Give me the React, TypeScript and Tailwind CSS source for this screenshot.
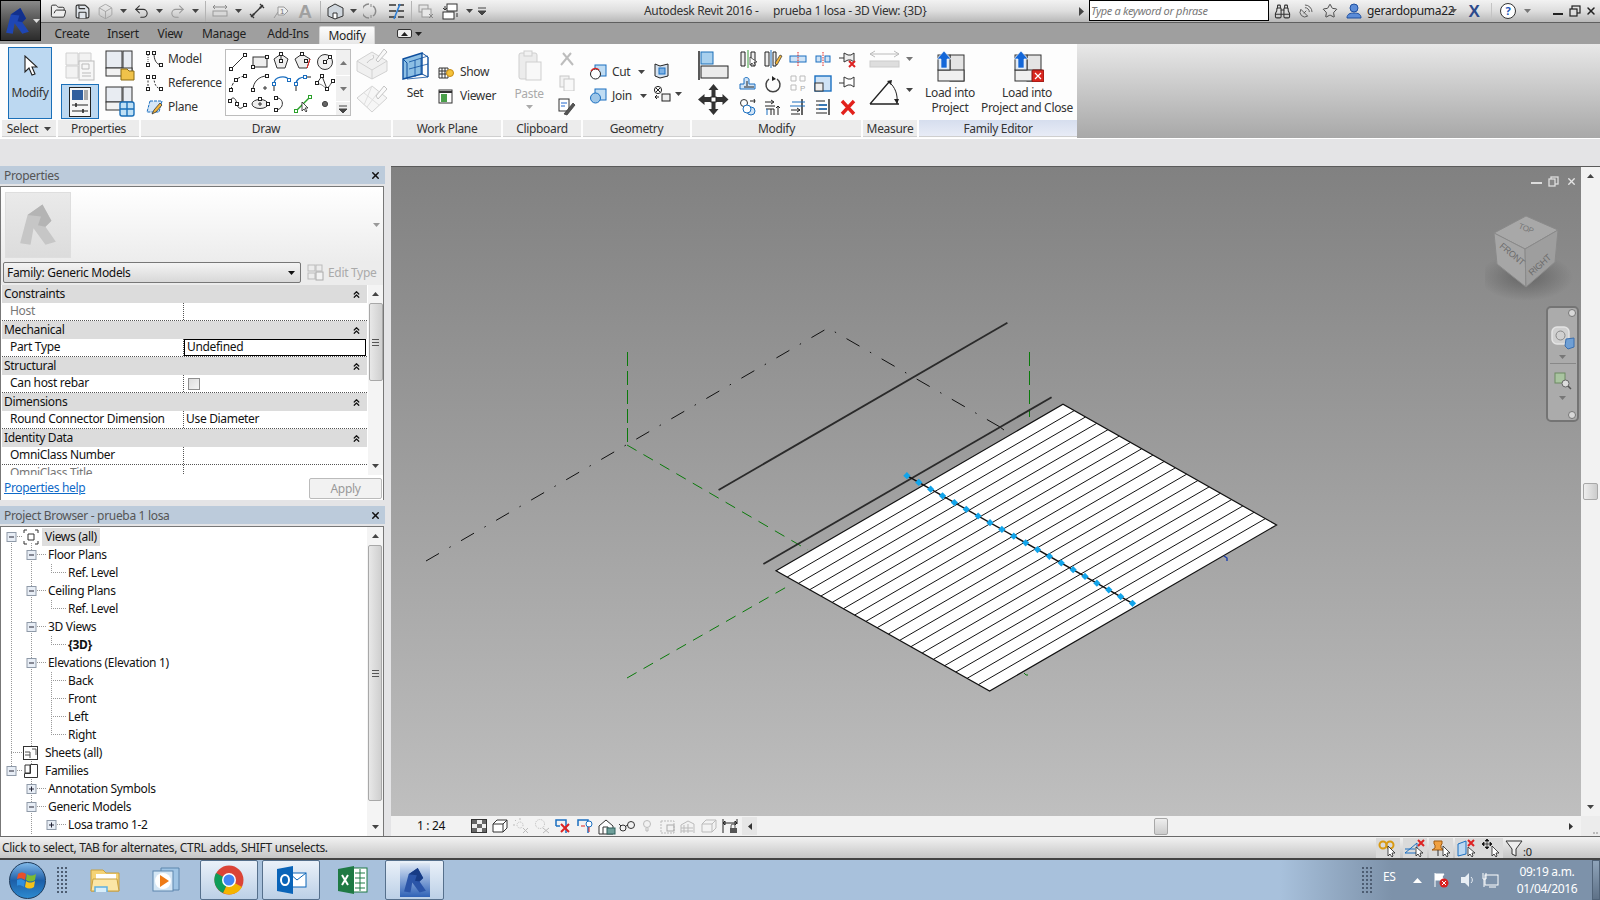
import React from "react";
import { FolderOpen, Save, Box, Undo2, Redo2, Binoculars, SatelliteDish, Star, X, ChevronsUp } from "lucide-react";

type SP = { w: number; h?: number; vb?: string; children?: React.ReactNode };
const S = ({ w, h, vb, children }: SP) => (
  <svg width={w} height={h ?? w} viewBox={vb ?? `0 0 ${w} ${h ?? w}`} fill="none" className="block shrink-0">
    {children}
  </svg>
);
const Dn = ({ c = "#444" }: { c?: string }) => (
  <svg width="7" height="4" viewBox="0 0 7 4" className="block shrink-0"><path d="M0 0h7L3.5 4z" fill={c} /></svg>
);
const N = ({ x, y, c = "#222" }: { x: number; y: number; c?: string }) => (
  <rect x={x - 1.5} y={y - 1.5} width="3" height="3" fill="#fff" stroke={c} strokeWidth="1" />
);
const Logo = ({ w = 24, c1 = "#1e46b4", c2 = "#12308c" }: { w?: number; c1?: string; c2?: string }) => (
  <svg width={w} height={w * 1.2} viewBox="0 0 24 29" className="block shrink-0">
    <path d="M5 8 15 1l6 11-4 4 7 10-7 2-8-11-2 11-7-1z" fill={c1} />
    <path d="M15 1l6 11-4 4-5-1 2-6-9-1z" fill={c2} />
  </svg>
);

/* ---------- title bar ---------- */
const Slot = ({ cls, children }: { cls: string; children?: React.ReactNode }) => (
  <div className={`${cls} flex items-center justify-center shrink-0`}>{children}</div>
);
const Sep = ({ cls }: { cls: string }) => (
  <div className={`${cls} flex justify-center shrink-0`}><div className="w-px h-[21px] bg-[#b4b4b4]" /></div>
);

function TitleBar() {
  return (
    <div className="h-[23px] shrink-0 flex items-center bg-gradient-to-b from-[#f2f2f2] via-[#dedede] to-[#b8b8b8] border-b border-[#5f5f5f] relative">
      <div className="w-[46px] shrink-0" />
      <Slot cls="w-[24px]"><FolderOpen size={17} strokeWidth={1.4} color="#333" fill="#eee" /></Slot>
      <Slot cls="w-[24px]"><Save size={17} strokeWidth={1.6} color="#333" fill="#dfe4ea" /></Slot>
      <Slot cls="w-[22px]"><Box size={17} strokeWidth={1.3} color="#a4a4a4" /></Slot>
      <Slot cls="w-[14px]"><Dn /></Slot>
      <Slot cls="w-[22px]"><Undo2 size={17} strokeWidth={1.5} color="#333" /></Slot>
      <Slot cls="w-[14px]"><Dn /></Slot>
      <Slot cls="w-[22px]"><Redo2 size={17} strokeWidth={1.5} color="#999" /></Slot>
      <Slot cls="w-[14px]"><Dn /></Slot>
      <Sep cls="w-[6px]" />
      <Slot cls="w-[24px]">
        <S w={16} h={14}><path d="M1 3h14M1 3l2-2M1 3l2 2M15 3l-2-2M15 3l-2 2" stroke="#8a8a8a" /><rect x="1" y="7" width="14" height="5" fill="#d8d8d8" stroke="#999" /></S>
      </Slot>
      <Slot cls="w-[12px]"><Dn /></Slot>
      <Slot cls="w-[26px]">
        <S w={16}><path d="M2 14 14 2M1 11l4 4M11 1l4 4" stroke="#333" strokeWidth="1.3" /><path d="M3 13l3-1-2-2zM13 3l-3 1 2 2z" fill="#333" /></S>
      </Slot>
      <Slot cls="w-[22px]">
        <S w={16}><path d="M1 15l4-6" stroke="#999" /><path d="M5 4h6l4 4-4 4H5z" stroke="#999" fill="#eee" /><text x="7" y="11" fontSize="8" fill="#777" fontFamily="Liberation Sans">1</text></S>
      </Slot>
      <Slot cls="w-[26px]"><span className="font-['Liberation_Sans',sans-serif] font-bold text-[19px] leading-none text-[#a0a0a0]">A</span></Slot>
      <Sep cls="w-[4px]" />
      <Slot cls="w-[26px]">
        <S w={17}><path d="M1 5l7-4 8 4v8l-8 3-7-3z" fill="#cfd6dd" stroke="#333" /><path d="M6 15v-5h4v5" fill="#fff" stroke="#333" /></S>
      </Slot>
      <Slot cls="w-[10px]"><Dn /></Slot>
      <Slot cls="w-[26px]">
        <S w={16}><path d="M6 1a6 6 0 1 0 0 14M10 3a6 6 0 0 1 0 10" stroke="#8a8a8a" strokeWidth="1.4" /><path d="M8 1v3M8 12v3" stroke="#8a8a8a" /></S>
      </Slot>
      <Slot cls="w-[24px]">
        <S w={17}><path d="M1 2h7M1 8h7M1 14h7M10 2h6M10 8h6M10 14h6" stroke="#333" strokeWidth="1.6" /><path d="M6 16 12 1" stroke="#2d7fd6" strokeWidth="1.6" /></S>
      </Slot>
      <Sep cls="w-[6px]" />
      <Slot cls="w-[24px]">
        <S w={16}><rect x="1" y="2" width="9" height="7" stroke="#999" /><rect x="4" y="6" width="9" height="8" fill="#e8e8e8" stroke="#999" /><path d="M11 11l4 4M15 11l-4 4" stroke="#888" /></S>
      </Slot>
      <Slot cls="w-[26px]">
        <S w={18} h={17}><rect x="5" y="1" width="10" height="7" stroke="#333" fill="#fff" /><rect x="1" y="9" width="11" height="7" stroke="#333" fill="#fff" /><path d="M3 3v4M1 5l2 2 2-2M15 10v4" stroke="#333" /></S>
      </Slot>
      <Slot cls="w-[10px]"><Dn /></Slot>
      <Slot cls="w-[16px]">
        <S w={8} h={8}><path d="M0 1h8M0 4h8L4 8z" stroke="#444" fill="#444" /></S>
      </Slot>
      <div className="w-[154px] shrink-0" />
      <div className="w-[129px] shrink-0 text-[12px] text-[#333] whitespace-nowrap">Autodesk Revit 2016 -</div>
      <div className="w-[306px] shrink-0 text-[12px] text-[#333] whitespace-nowrap">prueba 1 losa - 3D View: {"{3D}"}</div>
      <svg width="5" height="9" viewBox="0 0 5 9" className="shrink-0"><path d="M0 0l5 4.5L0 9z" fill="#444" /></svg>
      <div className="w-[5px] shrink-0" />
      <div className="w-[180px] h-[21px] self-start shrink-0 bg-white border border-black pl-[1px] text-[11px] italic leading-[19px] text-[#777]">Type a keyword or phrase</div>
      <Slot cls="w-[24px] ml-[1px]"><Binoculars size={17} strokeWidth={1.5} color="#333" /></Slot>
      <Slot cls="w-[24px]"><SatelliteDish size={16} strokeWidth={1.4} color="#555" /></Slot>
      <Slot cls="w-[24px]"><Star size={16} strokeWidth={1.3} color="#333" /></Slot>
      <Slot cls="w-[24px]">
        <S w={16}><circle cx="8" cy="5" r="4" fill="#5b8cd8" stroke="#1f4f9f" /><path d="M1 15c0-4 3-5 7-5s7 1 7 5z" fill="#5b8cd8" stroke="#1f4f9f" /></S>
      </Slot>
      <div className="w-[84px] shrink-0 text-[12px] text-[#222] pl-[1px] whitespace-nowrap">gerardopuma22</div>
      <Dn c="#555" />
      <Slot cls="w-[34px]"><span className="font-['Liberation_Sans',sans-serif] font-bold text-[17px] leading-none text-[#2c4a8c]">X</span></Slot>
      <div className="w-px h-[16px] bg-[#c4c4c4] shrink-0" />
      <Slot cls="w-[32px]">
        <div className="w-[16px] h-[16px] rounded-full border border-[#333] bg-white text-[#1d56b8] text-[11px] font-bold leading-[14px] text-center">?</div>
      </Slot>
      <Dn c="#777" />
      <div className="w-[19px] shrink-0" />
      <Slot cls="w-[16px]"><div className="w-[10px] h-[2px] bg-[#222] mt-[6px]" /></Slot>
      <Slot cls="w-[18px]">
        <S w={12}><rect x="3" y="1" width="8" height="7" stroke="#222" strokeWidth="1.2" /><rect x="1" y="4" width="7" height="7" fill="#ddd" stroke="#222" strokeWidth="1.2" /></S>
      </Slot>
      <Slot cls="w-[14px]"><X size={12} strokeWidth={3} color="#222" /></Slot>
      {/* application button */}
      <div className="absolute left-0 top-0 w-[41px] h-[41px] bg-gradient-to-b from-[#8a8a8a] via-[#555] to-[#2c2c2c] border border-black flex items-center pl-[5px] z-10">
        <Logo w={23} />
        <div className="ml-[4px]"><Dn c="#ddd" /></div>
      </div>
    </div>
  );
}

function Tabs() {
  return (
    <div className="h-[21px] shrink-0 flex items-end bg-[#9f9f9f] text-[12px] text-[#1e1e1e] pl-[47px]">
      <div className="w-[50px] h-[20px] text-center leading-[20px]">Create</div>
      <div className="w-[52px] h-[20px] text-center leading-[20px]">Insert</div>
      <div className="w-[42px] h-[20px] text-center leading-[20px]">View</div>
      <div className="w-[66px] h-[20px] text-center leading-[20px]">Manage</div>
      <div className="w-[62px] h-[20px] text-center leading-[20px]">Add-Ins</div>
      <div className="w-[56px] h-[18px] text-center leading-[17px] bg-gradient-to-b from-[#fcfcfc] to-[#e8e8e8] border-t border-x border-[#d4d4d4] rounded-t-[2px]">Modify</div>
      <div className="w-[15px] h-[9px] ml-[22px] mb-[6px] rounded-[2px] border border-[#333] bg-[#f0f0f0] flex items-center justify-center"><svg width="7" height="4"><path d="M0 4h7L3.5 0z" fill="#222" /></svg></div>
      <div className="ml-[3px] mb-[8px]"><Dn c="#222" /></div>
    </div>
  );
}

/* ---------- ribbon ---------- */
const Panel = ({ cls, label, strip = "bg-[#ececec]", children }: { cls: string; label: React.ReactNode; strip?: string; children?: React.ReactNode }) => (
  <div className={`${cls} h-[94px] shrink-0 flex flex-col`}>
    <div className="h-[76px] flex">{children}</div>
    <div className={`${strip} h-[17px] pt-[1px] flex items-center justify-center gap-[6px] text-[12px] leading-none text-[#333] border-b border-[#cfcfcf]`}>{label}</div>
  </div>
);
const Rows = ({ children, cls = "" }: { children: React.ReactNode; cls?: string }) => <div className={`flex flex-col pt-[3px] ${cls}`}>{children}</div>;
const RowItem = ({ icon, text, gray, arrow }: { icon: React.ReactNode; text: string; gray?: boolean; arrow?: boolean }) => (
  <div className="h-[24px] flex items-center">
    <div className="w-[18px] flex justify-center shrink-0">{icon}</div>
    <span className={`ml-[5px] text-[12px] ${gray ? "text-[#aaa]" : "text-[#333]"}`}>{text}</span>
    {arrow && <div className="ml-[8px]"><Dn /></div>}
  </div>
);

const IcModel = () => <S w={18}><path d="M3 3v9M3 14h0" stroke="#555" strokeDasharray="1 1" /><path d="M9 3c0 7 2 11 7 12" stroke="#333" /><N x={3} y={3} /><N x={9} y={3} /><N x={3} y={15} /><N x={16} y={15} /></S>;
const IcRef = () => <S w={18}><path d="M3 3v12M9 3c0 7 2 11 7 12" stroke="#333" strokeDasharray="2 1.5" /><N x={3} y={3} /><N x={9} y={3} /><N x={3} y={15} /><N x={16} y={15} /></S>;
const IcPlane = () => <S w={18}><path d="M5 3h12l-3 11H2z" stroke="#1b6fc0" fill="#d5e6f6" strokeDasharray="3 1" /><path d="M7 16l2-4 6-7 2 2-6 7z" fill="#f5b638" stroke="#333" strokeWidth=".8" /></S>;

const gal: React.ReactNode[] = [
  <><path d="M3 17 17 3" stroke="#333" /><N x={3} y={17} /><N x={17} y={3} /></>,
  <><rect x="3" y="5" width="14" height="10" fill="#eee" stroke="#333" /><N x={3} y={15} /><N x={17} y={5} /></>,
  <><path d="M10 2l7 5-3 9H6L3 7z" fill="#eee" stroke="#333" /><path d="M10 9V2" stroke="#333" /><N x={10} y={2} /><N x={10} y={9} /></>,
  <><path d="M9 2l8 5-3 9H6L2 7z" fill="#eee" stroke="#333" /><path d="M17 7l-3 9" stroke="#e22" /><N x={9} y={2} /><N x={13} y={9} /></>,
  <><circle cx="10" cy="10" r="7.5" fill="#eee" stroke="#333" /><path d="M10 10l5-5" stroke="#333" /><N x={10} y={10} /><N x={15} y={5} /></>,
  <><path d="M3 17C4 9 9 4 17 3" stroke="#333" strokeDasharray="3 1.5" /><N x={3} y={17} /><N x={8} y={7} /><N x={17} y={3} /></>,
  <><path d="M3 17C3 9 9 3 17 3" stroke="#333" /><N x={3} y={17} /><N x={17} y={3} /><path d="M13 15h4M15 13v4" stroke="#333" /></>,
  <><path d="M3 11C3 3 15 2 18 7" stroke="#1b6fc0" strokeWidth="1.2" /><path d="M3 12v6" stroke="#222" /><N x={3} y={11} c="#1b6fc0" /><N x={18} y={7} c="#1b6fc0" /></>,
  <><path d="M3 11C3 6 8 4 12 4" stroke="#1b6fc0" strokeWidth="1.2" /><path d="M3 12v6M14 4h4" stroke="#222" /><N x={3} y={11} c="#1b6fc0" /><N x={12} y={4} c="#1b6fc0" /></>,
  <><path d="M2 10 7 3l5 13 6-8" stroke="#333" /><path d="M2 10l5 2 5 4 6-8" stroke="#888" /><N x={2} y={10} /><N x={7} y={3} /><N x={12} y={16} /><N x={18} y={8} /></>,
  <><path d="M2 7c3-6 6-2 7 3s4 6 8 1" stroke="#333" /><N x={2} y={7} /><N x={9} y={10} /><N x={17} y={11} /></>,
  <><ellipse cx="10" cy="10" rx="8" ry="4.5" fill="#eee" stroke="#333" /><path d="M8 10h4M10 8v4" stroke="#333" /><N x={10} y={5} /><N x={18} y={10} /></>,
  <><path d="M5 4c8-1 9 11 0 12" stroke="#333" /><N x={5} y={4} /><N x={5} y={16} /></>,
  <><path d="M3 17 17 3" stroke="#2aa02a" strokeWidth="1.5" /><N x={3} y={17} c="#2aa02a" /><N x={17} y={3} c="#2aa02a" /><path d="M9 8v9l2-2 2 3 1-1-2-3h3z" fill="#fff" stroke="#222" strokeWidth=".8" /></>,
  <><circle cx="10" cy="10" r="2.6" fill="#666" stroke="#444" /></>,
];

const BigGray1 = () => <S w={34}><path d="M2 15 17 6l15 9v10l-15 8-15-8z" fill="#f0f0f0" stroke="#d2d2d2" /><path d="M2 15l15 9 15-9M17 24v9" stroke="#d2d2d2" /><path d="M12 17c4-6 8-2 6-8M21 14 29 3l3 3-9 10z" stroke="#c4c4c4" fill="#f8f8f8" /></S>;
const BigGray2 = () => <S w={34} h={32}><path d="M2 16 17 4l15 12-15 14z" fill="#f6f6f6" stroke="#d2d2d2" /><path d="M9 11l15 12M17 4 9 23M24 9 12 25" stroke="#e0e0e0" /><path d="M21 14 29 4l3 3-9 10z" stroke="#c4c4c4" fill="#fafafa" /></S>;

const B = "#1b6fc0";
const mod: React.ReactNode[] = [
  <><path d="M3 3h4v14H3zM13 3h4v14h-4z" fill="#eee" stroke="#222" /><path d="M10 1v18" stroke="#3a9c3a" /><path d="M12 8v8l2-2 2 3 1-1-1-3h3z" fill="#fff" stroke="#222" strokeWidth=".7" /></>,
  <><path d="M2 3h4v14H2zM10 3h3v14h-3z" fill="#eee" stroke="#222" /><path d="M8 1v18" stroke={B} /><path d="M12 14 17 6l2 1-5 9z" fill="#f5b638" stroke="#333" strokeWidth=".7" /></>,
  <><rect x="2" y="7" width="16" height="6" fill="#cfe3f6" stroke={B} /><path d="M10 3v14" stroke="#d22" strokeDasharray="1.5 1" /></>,
  <><rect x="3" y="7" width="5" height="6" fill="#cfe3f6" stroke={B} /><rect x="12" y="7" width="5" height="6" fill="#cfe3f6" stroke={B} /><path d="M10 3v14" stroke="#d22" strokeDasharray="1.5 1" /></>,
  <><path d="M1 9h5" stroke="#333" /><path d="M6 4l4 2h3l3-2v9l-3-2h-3l-4 2z" fill="#eee" stroke="#333" /><path d="M11 12l6 6M17 12l-6 6" stroke="#d22" strokeWidth="2" /></>,
  <><path d="M2 16V11h4V6c0-2 4-2 5 0v5h6v5z" fill="#cfe3f6" stroke={B} /><path d="M6 14h10M9 8v5" stroke="#222" /></>,
  <><path d="M6 6a7 7 0 1 0 8 0" stroke="#444" strokeWidth="1.5" /><path d="M9 3l4 3-4 2z" fill="#222" /></>,
  <><path d="M3 3h5v5H3zM12 3h5v5h-5zM3 12h5v5H3z" stroke="#bbb" /><text x="12" y="18" fontSize="8" fill="#aaa" fontFamily="Liberation Sans">P</text></>,
  <><rect x="2" y="3" width="16" height="15" fill="#cfe3f6" stroke={B} strokeWidth="1.4" /><rect x="2" y="10" width="8" height="8" fill="#eee" stroke="#333" /></>,
  <><path d="M1 10h5" stroke="#333" /><path d="M6 4l4 2h3l3-2v10l-3-2h-3l-4 2z" fill="#fff" stroke="#333" /></>,
  <><circle cx="6" cy="6" r="3.5" stroke="#333" /><circle cx="13" cy="14" r="4" fill="#cfe3f6" stroke={B} /><circle cx="9" cy="12" r="4" fill="#fff" stroke={B} /><path d="M12 4h5l-1-2M17 4l-1 2" stroke="#222" /></>,
  <><path d="M2 5h8M2 9h10M8 3l3 2-3 2" stroke="#222" /><path d="M3 12h8v6M8 12v6M15 18V9M13 11l2-2 2 2" stroke="#222" /><path d="M4 12v6" stroke={B} /></>,
  <><path d="M14 2v16" stroke="#222" strokeWidth="1.4" /><path d="M17 5H4M17 9H2" stroke={B} strokeWidth="1.2" /><path d="M3 13h9M9 11l3 2-3 2M3 17h9" stroke="#222" /></>,
  <><path d="M16 2v16" stroke="#222" strokeWidth="1.4" /><path d="M3 4h9M3 8h11M3 12h11M3 16h11" stroke="#222" /><path d="M6 8h8M6 12h8" stroke={B} strokeWidth="1.4" /></>,
  <><path d="M4 4l12 13M16 4 4 17" stroke="#e2211c" strokeWidth="3.4" /></>,
];

const IcLoad = ({ close }: { close?: boolean }) => (
  <S w={34} h={31}>
    <rect x="17" y="4" width="14" height="26" fill="#e4e4e4" stroke="#333" />
    <rect x="5" y="19" width="26" height="11" fill="#f0f0f0" stroke="#333" />
    <rect x="5" y="4" width="12" height="15" fill="#dfe8f2" stroke="#333" />
    <path d="M11 0l7 8h-4v9H8V8H4z" fill="#1467d8" stroke="#fff" strokeWidth=".6" />
    {close && <><rect x="22" y="19" width="12" height="12" rx="1" fill="#d9261e" stroke="#7e1410" /><path d="M25 22l6 6M31 22l-6 6" stroke="#fff" strokeWidth="1.2" /></>}
  </S>
);

function Ribbon() {
  return (
    <div className="h-[94px] shrink-0 flex bg-white">
      <div className="flex gap-[2px] pl-[2px] w-[1077px] shrink-0 bg-[#fdfdfd]">
        <Panel cls="w-[54px]" label={<>Select<Dn /></>}>
          <div className="ml-[6px] mt-[3px] w-[44px] h-[72px] bg-[#bcd8f1] border border-[#1a6fb8] flex flex-col items-center">
            <div className="mt-[7px]"><S w={15} h={21}><path d="M2 1v16l4-4 3 7 3-1-3-7h5z" fill="#fff" stroke="#222" strokeWidth="1.1" /></S></div>
            <span className="mt-[8px] text-[12px] text-[#333]">Modify</span>
          </div>
        </Panel>
        <Panel cls="w-[81px]" label="Properties">
          <div className="grid w-[80px] h-[72px] mt-[3px] ml-[3px] grid-cols-[38px_40px] grid-rows-[37px_35px]">
            <div className="flex justify-center items-center">
              <S w={30}><path d="M1 2h12v12H1zM14 2h12v12H14zM1 15h12v12H1z" fill="#f2f2f2" stroke="#d0d0d0" /><rect x="14" y="10" width="15" height="19" fill="#f6f6f6" stroke="#bbb" /><path d="M17 13h7v5h-7zM17 22h9M17 25h9" stroke="#bbb" /></S>
            </div>
            <div className="flex items-center justify-end pr-[4px]">
              <S w={31}><rect x="19" y="1" width="9" height="23" fill="#e8ecf2" stroke="#333" /><rect x="2" y="1" width="16" height="17" fill="#e8ecf2" stroke="#333" /><rect x="2" y="18" width="26" height="8" fill="#f2f2f2" stroke="#333" /><path d="M17 19h6l2 2h5v9H17z" fill="#f0c24a" stroke="#8a6a12" /></S>
            </div>
            <div className="bg-[#bcd8f1] border border-[#1a6fb8] flex items-center justify-center">
              <S w={22} h={30}><rect x=".5" y=".5" width="21" height="29" fill="#f6f6f6" stroke="#222" /><rect x="3" y="3" width="11" height="10" fill="#2f5e9e" /><rect x="15" y="3" width="4" height="10" fill="#aaa" /><path d="M3 18h16M3 24h16" stroke="#222" /><path d="M7 16v4M14 22v4" stroke="#222" strokeWidth="1.5" /></S>
            </div>
            <div className="flex items-center justify-end pr-[4px]">
              <S w={31}><rect x="19" y="1" width="9" height="21" fill="#e8ecf2" stroke="#333" /><rect x="2" y="1" width="16" height="15" fill="#e8ecf2" stroke="#333" /><rect x="2" y="16" width="26" height="8" fill="#f2f2f2" stroke="#333" /><rect x="16" y="16" width="14" height="14" rx="2" fill="#bfe0f5" stroke="#1a6fb8" strokeWidth="1.4" /><path d="M23 16v14M16 23h14" stroke="#1a6fb8" strokeWidth="1.4" /></S>
            </div>
          </div>
        </Panel>
        <Panel cls="w-[250px]" label="Draw">
          <Rows cls="w-[84px] pl-[4px]">
            <RowItem icon={<IcModel />} text="Model" />
            <RowItem icon={<IcRef />} text="Reference" />
            <RowItem icon={<IcPlane />} text="Plane" />
          </Rows>
          <div className="mt-[5px] w-[126px] h-[67px] border border-[#bdbdbd] flex bg-white">
            <div className="grid grid-cols-5 w-[110px] pl-[1px] items-center justify-items-center content-center">
              {gal.map((g, i) => <div key={i} className="h-[21px] flex items-center"><S w={20}>{g}</S></div>)}
            </div>
            <div className="w-[14px] ml-auto flex flex-col bg-[#f0f0f0]">
              <div className="h-[26px] flex items-center justify-center border-b border-white"><svg width="7" height="4"><path d="M0 4h7L3.5 0z" fill="#777" /></svg></div>
              <div className="h-[26px] flex items-center justify-center border-b border-white"><Dn c="#777" /></div>
              <div className="flex-1 flex items-center justify-center"><S w={8}><path d="M0 1h8M0 4h8L4 8z" stroke="#444" fill="#444" /></S></div>
            </div>
          </div>
          <div className="flex flex-col items-center pl-[4px] pt-[2px] gap-[2px]"><BigGray1 /><BigGray2 /></div>
        </Panel>
        <Panel cls="w-[108px]" label="Work Plane">
          <div className="w-[42px] flex flex-col items-center pt-[7px] ml-[1px]">
            <S w={28} h={30}><path d="M2 8l19-6v21L2 28z" fill="#8dbfe4" stroke="#0e4f9e" strokeWidth="1.4" /><path d="M2 8l4 4v16M21 2l6 4v20l-6-3" stroke="#0e4f9e" /><path d="M27 6v20L6 28M8 11l19-6M8 18l19-5M14 9v17M20 7v17" stroke="#0e4f9e" strokeWidth=".8" /></S>
            <span className="mt-[3px] text-[12px] text-[#333]">Set</span>
          </div>
          <Rows cls="pt-[16px] pl-[1px]">
            <RowItem icon={<S w={17}><path d="M1 4h9v10H1zM1 7h9M1 10h9M4 4v10M7 4v10" stroke="#333" /><circle cx="12" cy="9" r="3.5" fill="#f5c23a" stroke="#c78b12" /></S>} text="Show" />
            <RowItem icon={<S w={17}><rect x="1" y="2" width="13" height="13" fill="#fff" stroke="#333" /><rect x="3" y="6" width="6" height="8" fill="#4aa04a" /><path d="M1 4h13" stroke="#333" strokeWidth="2" /></S>} text="Viewer" />
          </Rows>
        </Panel>
        <Panel cls="w-[78px]" label="Clipboard">
          <div className="w-[52px] flex flex-col items-center pt-[6px]">
            <S w={26} h={31}><rect x="3" y="3" width="18" height="26" rx="2" fill="#ececec" stroke="#cfcfcf" /><rect x="8" y="1" width="8" height="5" fill="#f2f2f2" stroke="#cfcfcf" /><rect x="10" y="12" width="15" height="18" fill="#f8f8f8" stroke="#cfcfcf" /></S>
            <span className="mt-[4px] text-[12px] text-[#aaa]">Paste</span>
            <div className="mt-[2px]"><Dn c="#aaa" /></div>
          </div>
          <Rows cls="w-[24px] items-center">
            <div className="h-[24px] flex items-center"><S w={16}><path d="M2 14 12 2M14 14 4 2" stroke="#bdbdbd" strokeWidth="2" /></S></div>
            <div className="h-[24px] flex items-center"><S w={16}><rect x="1" y="1" width="9" height="11" fill="#f2f2f2" stroke="#c8c8c8" /><rect x="5" y="4" width="10" height="12" fill="#f8f8f8" stroke="#c8c8c8" /></S></div>
            <div className="h-[24px] flex items-center"><S w={18}><rect x="1" y="1" width="10" height="12" fill="#fff" stroke="#333" /><path d="M3 5h6M3 8h4" stroke="#26c" /><path d="M6 16 15 5l2 2-8 10z" fill="#555" stroke="#333" strokeWidth=".7" /></S></div>
          </Rows>
        </Panel>
        <Panel cls="w-[107px]" label="Geometry">
          <Rows cls="pt-[16px] pl-[6px] w-[70px] shrink-0">
            <RowItem icon={<S w={18}><rect x="6" y="2" width="11" height="11" fill="#bfdcf3" stroke={B} /><circle cx="6.5" cy="11" r="5" fill="#fff" stroke="#222" /><path d="M2 8a5 5 0 0 1 8-1" stroke="#d22" strokeWidth="1.3" /></S>} text="Cut" arrow />
            <RowItem icon={<S w={18}><rect x="6" y="2" width="11" height="11" fill="#bfdcf3" stroke={B} /><circle cx="6.5" cy="11" r="5" fill="#9ec6e8" stroke={B} /></S>} text="Join" arrow />
          </Rows>
          <div className="flex flex-col items-start pt-[17px] gap-[6px]">
            <S w={17} h={18}><path d="M2 3l5 2 8-2v12l-8 2-5-2z" fill="#d7e2ee" stroke="#222" /><rect x="6" y="7" width="6" height="6" fill="#7fb2e4" stroke={B} /></S>
            <div className="flex items-center gap-[4px]">
              <S w={18}><circle cx="5" cy="5" r="3.6" stroke="#222" /><path d="M3 3l4 4M7 3 3 7" stroke="#222" /><path d="M2 12h4M4 10l-2 2 2 2" stroke="#222" /><rect x="9" y="9" width="8" height="7" fill="#eee" stroke="#222" /></S>
              <Dn />
            </div>
          </div>
        </Panel>
        <Panel cls="w-[169px]" label="Modify">
          <div className="w-[40px] flex flex-col items-center pt-[7px] pl-[3px]">
            <S w={31} h={30}><rect x="3" y="1" width="12" height="12" fill="#a8d0ee" stroke="#1a6fb8" /><path d="M1 0v29" stroke="#222" strokeWidth="1.5" /><rect x="3" y="15" width="27" height="12" fill="#ebebeb" stroke="#222" /></S>
            <div className="mt-[3px]"><S w={31}><path d="M15.5 0l5 6h-3v7h7v-3l6 5.5-6 5.500v-3h-7v7h3l-5 6-5-6h3v-7h-7v3L0 15.500 6.500 10v3h7V6h-3z" fill="#333" /><rect x="13" y="13" width="5" height="5" fill="#fff" stroke="#222" /></S></div>
          </div>
          <div className="grid grid-cols-5 grid-rows-3 w-[125px] ml-[3px] pt-[3px] h-[75px] justify-items-center items-center">
            {mod.map((g, i) => <S key={i} w={20}>{g}</S>)}
          </div>
        </Panel>
        <Panel cls="w-[54px]" label="Measure">
          <div className="flex flex-col pt-[5px] pl-[6px]">
            <div className="flex items-center gap-[6px]">
              <S w={31} h={20}><path d="M1 5h29M1 5l5-3M1 5l5 3M30 5l-5-3M30 5l-5 3" stroke="#bbb" /><rect x="1" y="12" width="29" height="6" fill="#dedede" stroke="#ccc" /></S>
              <Dn c="#777" />
            </div>
            <div className="flex items-center gap-[6px] mt-[5px]">
              <S w={31} h={32}><path d="M1 30h29M1 30 20 8" stroke="#222" strokeWidth="1.3" /><path d="M20 8c6 5 9 12 8 22" stroke="#222" /><path d="M18 7l5-1-1 5zM28 30l-3-5h5z" fill="#222" /></S>
              <Dn />
            </div>
          </div>
        </Panel>
        <Panel cls="w-[158px]" label="Family Editor" strip="bg-gradient-to-b from-[#d6deee] to-[#e8ecf6]">
          <div className="w-[60px] shrink-0 ml-[1px] flex flex-col items-center pt-[7px]">
            <IcLoad />
            <span className="mt-[3px] text-[12px] leading-[15px] text-[#333] text-center">Load into<br />Project</span>
          </div>
          <div className="flex-1 flex flex-col items-center pt-[7px] pr-[3px]">
            <IcLoad close />
            <span className="mt-[3px] text-[12px] leading-[15px] text-[#333] text-center whitespace-nowrap">Load into<br />Project and Close</span>
          </div>
        </Panel>
      </div>
      <div className="flex-1 bg-gradient-to-b from-[#e8e8e8] to-[#a8a8a8]" />
    </div>
  );
}

/* ---------- scroll bar ---------- */
const Up = ({ c = "#444" }: { c?: string }) => <svg width="7" height="4" className="block"><path d="M0 4h7L3.5 0z" fill={c} /></svg>;
const VScroll = ({ thumb, cls }: { thumb: string; cls: string }) => (
  <div className={`${cls} shrink-0 flex flex-col items-center bg-[#f4f4f4]`}>
    <div className="h-[18px] flex items-center"><Up /></div>
    <div className="flex-1 w-full flex flex-col">
      <div className={`${thumb} w-[14px] mx-auto rounded-[2px] border border-[#a8a8a8] bg-gradient-to-r from-[#e8e8e8] to-[#cfcfcf] flex flex-col items-center justify-center gap-[2px]`}>
        <div className="w-[7px] h-px bg-[#555]" /><div className="w-[7px] h-px bg-[#555]" /><div className="w-[7px] h-px bg-[#555]" />
      </div>
    </div>
    <div className="h-[18px] flex items-center"><Dn /></div>
  </div>
);

/* ---------- properties ---------- */
const Title = ({ text }: { text: string }) => (
  <div className="h-[18px] shrink-0 bg-[#bccbdb] flex items-center justify-between pl-[4px] pr-[4px] pt-[1px] text-[12px] text-[#555]">
    <span>{text}</span><X size={11} strokeWidth={3.2} color="#111" />
  </div>
);
const Sec = ({ t }: { t: string }) => (
  <div className="h-[18px] bg-[#dcdcdc] flex items-center justify-between pl-[2px] pr-[5px] text-[12px] text-[#111]">
    <span>{t}</span><ChevronsUp size={11} strokeWidth={2.6} color="#111" />
  </div>
);
const Row = ({ k, gray, children }: { k: string; gray?: boolean; children?: React.ReactNode }) => (
  <div className="h-[18px] bg-white flex border-b border-dotted border-[#555] text-[12px] text-[#111]">
    <div className={`w-[182px] pl-[8px] leading-[16px] border-r border-dotted border-[#555] ${gray ? "text-[#777]" : ""}`}>{k}</div>
    <div className="flex-1 pl-[2px] leading-[16px] relative">{children}</div>
  </div>
);

function PropertiesPanel() {
  return (
    <div className="h-[334px] shrink-0 flex flex-col">
      <Title text="Properties" />
      <div className="h-[2px] shrink-0" />
      <div className="flex-1 flex flex-col bg-white border-t border-x border-[#777] mr-[1px]">
        <div className="h-[75px] shrink-0 bg-gradient-to-b from-white to-[#ececec] flex items-center pl-[4px] pr-[3px] justify-between">
          <div className="w-[66px] h-[66px] bg-gradient-to-b from-[#eaeaea] to-[#dcdcdc] border border-[#dedede] flex items-center justify-center">
            <Logo w={36} c1="#c6c6c6" c2="#b4b4b4" />
          </div>
          <Dn c="#999" />
        </div>
        <div className="h-[23px] shrink-0 bg-[#ececec] flex">
          <div className="w-[298px] h-[21px] ml-[2px] border border-[#777] rounded-[2px] bg-gradient-to-b from-[#f4f4f4] to-[#d8d8d8] flex items-center justify-between pl-[3px] pr-[5px] text-[12px] text-[#111]">
            <span>Family: Generic Models</span><Dn c="#111" />
          </div>
          <div className="ml-[6px] flex items-center gap-[4px] text-[12px] text-[#aaa] h-[21px]">
            <S w={17}><rect x="1" y="1" width="7" height="6" stroke="#bbb" /><rect x="1" y="9" width="7" height="6" stroke="#bbb" /><rect x="9" y="1" width="6" height="6" stroke="#bbb" /><rect x="9" y="8" width="7" height="8" fill="#f2f2f2" stroke="#aaa" /></S>
            <span>Edit Type</span>
          </div>
        </div>
        <div className="h-[190px] shrink-0 flex bg-white overflow-hidden">
          <div className="w-[365px] shrink-0 overflow-hidden ml-[1px]">
            <Sec t="Constraints" /><Row k="Host" gray />
            <Sec t="Mechanical" />
            <Row k="Part Type"><div className="absolute left-0 top-0 right-[1px] h-[17px] border border-black pl-[2px] leading-[14px] bg-white">Undefined</div></Row>
            <Sec t="Structural" />
            <Row k="Can host rebar"><div className="mt-[3px] ml-[2px] w-[12px] h-[12px] border border-[#8e8e8e] bg-gradient-to-br from-[#ddd] to-[#f4f4f4]" /></Row>
            <Sec t="Dimensions" /><Row k="Round Connector Dimension">Use Diameter</Row>
            <Sec t="Identity Data" /><Row k="OmniClass Number" /><Row k="OmniClass Title" gray />
          </div>
          <VScroll cls="w-[15px] ml-[1px]" thumb="h-[78px]" />
        </div>
        <div className="flex-1 flex items-center justify-between pl-[3px] pr-[1px] bg-white">
          <span className="text-[12px] text-[#0e6ac8] underline">Properties help</span>
          <div className="w-[73px] h-[21px] mt-[1px] rounded-[2px] border border-[#bbb] bg-[#f2f2f2] text-[12px] leading-[19px] text-[#999] text-center">Apply</div>
        </div>
      </div>
    </div>
  );
}

/* ---------- project browser ---------- */
type TN = { t: React.ReactNode; l: 0 | 1 | 2 | 3; sel?: boolean };
const tree: TN[] = [
  { t: "Views (all)", l: 0, sel: true },
  { t: "Floor Plans", l: 1 }, { t: "Ref. Level", l: 2 },
  { t: "Ceiling Plans", l: 1 }, { t: "Ref. Level", l: 2 },
  { t: "3D Views", l: 1 }, { t: <b>{"{3D}"}</b>, l: 2 },
  { t: "Elevations (Elevation 1)", l: 1 },
  { t: "Back", l: 2 }, { t: "Front", l: 2 }, { t: "Left", l: 2 }, { t: "Right", l: 2 },
  { t: "Sheets (all)", l: 0 }, { t: "Families", l: 0 },
  { t: "Annotation Symbols", l: 1 }, { t: "Generic Models", l: 1 }, { t: "Losa tramo 1-2", l: 2 },
];
const cy = (i: number) => 10 + 18 * i;
const Plus = ({ x, y, plus }: { x: number; y: number; plus?: boolean }) => (
  <g>
    <rect x={x - 4.5} y={y - 4.5} width="9" height="9" fill="#e8eef6" stroke="#8f9aa8" />
    <path d={`M${x - 2.5} ${y}h5`} stroke="#223" />
    {plus && <path d={`M${x} ${y - 2.5}v5`} stroke="#223" />}
  </g>
);
function TreeLines() {
  const d = "stroke-[#999]";
  const L = (x1: number, y1: number, x2: number, y2: number, k: string) => <line key={k} x1={x1} y1={y1} x2={x2} y2={y2} className={d} strokeDasharray="1 1" />;
  return (
    <svg width="110" height="308" className="absolute left-0 top-0 pointer-events-none" fill="none">
      {L(10.5, cy(0), 10.5, cy(13), "a")}
      {L(30.5, cy(0) + 6, 30.5, 308, "b")}
      {[0, 12, 13].map((i) => L(10, cy(i) - .5, 22, cy(i) - .5, "h" + i))}
      {[1, 3, 5, 7, 14, 15].map((i) => L(30, cy(i) - .5, 45, cy(i) - .5, "m" + i))}
      {[2, 4, 6].map((i) => <g key={i}>{L(50.5, cy(i) - 9, 50.5, cy(i), "v" + i)}{L(50, cy(i) - .5, 65, cy(i) - .5, "k" + i)}</g>)}
      {L(50.5, cy(8) - 9, 50.5, cy(11), "v8")}
      {[8, 9, 10, 11].map((i) => L(50, cy(i) - .5, 65, cy(i) - .5, "q" + i))}
      {L(50, cy(16) - .5, 65, cy(16) - .5, "z")}
      <Plus x={10.5} y={cy(0)} /><Plus x={10.5} y={cy(13)} />
      {[1, 3, 5, 7, 15].map((i) => <Plus key={i} x={30.5} y={cy(i)} />)}
      <Plus x={30.5} y={cy(14)} plus /><Plus x={50.5} y={cy(16)} plus />
      <g transform={`translate(23 ${cy(0) - 7})`}>
        <path d="M0 3V0h3M11 0h3v3M14 11v3h-3M3 14H0v-3" stroke="#333" />
        <path d="M4 4h6v6H4z" stroke="#333" />
      </g>
      <g transform={`translate(22 ${cy(12) - 7})`}>
        <rect x=".5" y=".5" width="14" height="13" fill="#fff" stroke="#333" /><path d="M2 6h5v6M2 9h5M9 3h4v6" stroke="#555" />
      </g>
      <g transform={`translate(23 ${cy(13) - 7})`}>
        <path d="M.5 13.500h13V.5H6.500v9H.5z" fill="#fff" stroke="#333" /><path d="M1 1h5v8H1z" stroke="#333" />
      </g>
    </svg>
  );
}

function ProjectBrowser() {
  return (
    <div className="flex-1 flex flex-col min-h-0">
      <Title text="Project Browser - prueba 1 losa" />
      <div className="h-[2px] shrink-0" />
      <div className="flex-1 flex bg-white border-t border-x border-[#777] mr-[1px] overflow-hidden min-h-0">
        <div className="flex-1 relative overflow-hidden pt-[1px] text-[12px] text-[#111]">
          <TreeLines />
          {tree.map((n, i) => (
            <div key={i} className={`h-[18px] leading-[17px] ${n.l === 0 ? "pl-[41px]" : n.l === 1 ? "pl-[47px]" : "pl-[67px]"}`}>
              <span className={n.sel ? "bg-[#dedede] inline-block h-[18px] px-[3px]" : n.l === 0 ? "px-[3px]" : ""}>{n.t}</span>
            </div>
          ))}
        </div>
        <VScroll cls="w-[16px]" thumb="h-[256px]" />
      </div>
    </div>
  );
}

/* ---------- 3D view ---------- */
const lerp = (a: number, b: number, t: number) => a + (b - a) * t;
const PL = [776, 570.7], PT = [1063, 404.3], PR = [1276.6, 525], PB = [989.6, 691];

function Scene() {
  const hatch = Array.from({ length: 18 }, (_, i) => (i + 1) / 19);
  const dots = Array.from({ length: 20 }, (_, i) => i / 19);
  return (
    <svg viewBox="391 167 1190 650" width="1190" height="650" className="absolute inset-0" fill="none">
      <path d="M426 561 828 328 1000 427" stroke="#111" strokeDasharray="15 12 1.500 12" />
      <path d="M1000 427l4 3" stroke="#111" />
      <path d="M627.500 352V446M1029.500 352V417" stroke="#0a7a0a" strokeDasharray="14 5" />
      <path d="M627 445 808 550M627 678 790 585" stroke="#0a7a0a" strokeDasharray="11 8" />
      <path d="M1024 673l2 2h2" stroke="#0a7a0a" />
      <path d="M718.600 490 1007.400 322.700" stroke="#2a2a2a" strokeWidth="1.800" />
      <path d="M763.400 564 1051.600 397.300" stroke="#2a2a2a" strokeWidth="1.800" />
      <path d={`M${PL} L${PT} L${PR} L${PB} Z`} fill="#fff" stroke="#111" strokeWidth="1.200" />
      {hatch.map((t, i) => (
        <line key={i} x1={lerp(PL[0], PB[0], t)} y1={lerp(PL[1], PB[1], t)} x2={lerp(PT[0], PR[0], t)} y2={lerp(PT[1], PR[1], t)} stroke="#111" strokeWidth="1" />
      ))}
      <line x1="906.900" y1="475.700" x2="1132.500" y2="603.300" stroke="#111" strokeWidth="1.400" />
      {dots.map((t, i) => {
        const x = lerp(906.9, 1132.5, t), y = lerp(475.7, 603.3, t);
        return <path key={i} d={`M${x} ${y - 3.6}l3.600 3.600-3.600 3.600-3.600-3.600z`} fill="#12a4ea" />;
      })}
      <path d="M1224 556l3 2v3" stroke="#1a3fb0" strokeWidth="1.400" />
    </svg>
  );
}

function Viewport() {
  return (
    <div className="flex-1 relative overflow-hidden border-t border-[#5a5a5a] bg-gradient-to-b from-[#818181] to-[#bfbfbf]">
      <Scene />
      <div className="absolute right-[0px] top-[9px] flex items-center gap-[4px]">
        <div className="w-[12px] flex justify-center"><div className="w-[11px] h-[2px] mt-[3px] bg-[#ddd]" /></div>
        <div className="w-[14px] flex justify-center"><S w={11}><rect x="3" y="1" width="7" height="7" stroke="#ddd" strokeWidth="1.300" /><rect x="1" y="3" width="6" height="7" fill="#888" stroke="#ddd" strokeWidth="1.300" /></S></div>
        <div className="w-[14px] mr-[3px] flex justify-center"><X size={11} strokeWidth={3} color="#e4e4e4" /></div>
      </div>
      {/* view cube */}
      <svg width="90" height="96" viewBox="0 0 90 96" className="absolute left-[1094px] top-[44px]" fill="none">
        <defs>
          <radialGradient id="cubeShadow"><stop offset="0" stopColor="#555" stopOpacity=".7" /><stop offset="1" stopColor="#555" stopOpacity="0" /></radialGradient>
        </defs>
        <ellipse cx="41" cy="66" rx="47" ry="24" fill="url(#cubeShadow)" />
        <path d="M41 5 73 19 40 38 9 22z" fill="#a8a8a8" stroke="#8a8a8a" />
        <path d="M9 22 40 38 41 76 12 53z" fill="#a6a6a6" stroke="#8a8a8a" />
        <path d="M40 38 73 19 70 51 41 76z" fill="#9e9e9e" stroke="#8a8a8a" />
        <text transform="translate(33 17) rotate(22)" fontSize="8" fill="#777" fontFamily="Liberation Sans">TOP</text>
        <text transform="translate(14 36) rotate(40)" fontSize="9" fill="#6c6c6c" fontFamily="Liberation Sans">FRONT</text>
        <text transform="translate(47 65) rotate(-42)" fontSize="9" fill="#6c6c6c" fontFamily="Liberation Sans">RIGHT</text>
      </svg>
      {/* nav bar */}
      <div className="absolute left-[1155px] top-[139px] w-[33px] h-[116px] rounded-[5px] bg-[#ababab] border-2 border-[#747474] flex flex-col items-center">
        <div className="self-end mr-[1px] mt-[1px] w-[8px] h-[8px] rounded-full bg-[#d8d8d8] border border-[#777]" />
        <div className="mt-[9px]"><S w={24} h={25}><rect x="1" y="1" width="17" height="17" rx="5" fill="#d0d0d0" stroke="#e4e4e4" strokeWidth="1.500" /><circle cx="9.500" cy="9.500" r="4.500" stroke="#888" /><path d="M15 13l8-1v9l-6 2-3-3z" fill="#6f9fd4" stroke="#3c6fae" /></S></div>
        <div className="mt-[4px]"><Dn c="#777" /></div>
        <div className="mt-[4px] w-[26px] h-px bg-[#888]" />
        <div className="mt-[8px]"><S w={18} h={18}><rect x="1" y="1" width="10" height="10" fill="#a9c4a0" stroke="#6c8a62" /><circle cx="11.500" cy="11.500" r="3.500" fill="#ddd" stroke="#666" /><path d="M14 14l3 3" stroke="#555" strokeWidth="1.500" /></S></div>
        <div className="mt-[6px]"><Dn c="#777" /></div>
        <div className="mt-auto mb-[1px] self-end mr-[1px] w-[8px] h-[8px] rounded-full bg-[#d8d8d8] border border-[#777]" />
      </div>
    </div>
  );
}

const viewIcons: React.ReactNode[] = [
  <S w={16} h={14}><rect x=".5" y=".5" width="15" height="13" fill="#eee" stroke="#333" /><path d="M1 1h5v4H1zM11 1h4v4h-4zM6 5h5v4H6zM1 9h5v4H1zM11 9h4v4h-4z" fill="#666" /></S>,
  <S w={16} h={14}><path d="M5 1h10v8l-4 4H1V5z" fill="#fff" stroke="#333" /><path d="M1 5h10v8M11 5l4-4" stroke="#333" /></S>,
  <S w={16}><circle cx="7" cy="7" r="3" stroke="#bbb" strokeDasharray="1 1" /><path d="M7 0v2M0 7h2M2 2l1 1M10 10l5 5M15 10l-5 5" stroke="#bbb" /></S>,
  <S w={16}><circle cx="6" cy="6" r="4.500" stroke="#bbb" strokeDasharray="1 1" /><path d="M9 10l6 5M15 10l-6 5" stroke="#bbb" /></S>,
  <S w={17} h={16}><path d="M2 8V2h10v13" stroke="#1b6fc0" strokeWidth="1.500" /><path d="M2 8h4" stroke="#1b6fc0" strokeWidth="1.500" /><path d="M7 6l8 8M15 6l-8 8" stroke="#d22" strokeWidth="2" /></S>,
  <S w={17} h={16}><path d="M2 8V2h10v13" stroke="#1b6fc0" strokeWidth="1.500" /><circle cx="13" cy="6" r="3" fill="#fff" stroke="#1b6fc0" /><path d="M13 9v5M5 8h4" stroke="#d22" /></S>,
  <S w={18} h={17}><path d="M1 8l7-6 7 6v8H1z" fill="#fff" stroke="#333" /><path d="M5 16V9h5v7" stroke="#333" /><rect x="9" y="10" width="8" height="6" fill="#6e9f9a" stroke="#2f5f5a" /></S>,
  <S w={18} h={14}><circle cx="13" cy="6" r="3.500" stroke="#333" /><circle cx="5" cy="9" r="3" stroke="#333" /><path d="M1 5l2 2M8 7l2-1" stroke="#333" /></S>,
  <S w={10} h={14}><circle cx="5" cy="5" r="3.500" stroke="#bbb" /><path d="M4 9v3h2V9" stroke="#bbb" /></S>,
  <S w={17} h={15}><rect x="1" y="2" width="13" height="12" stroke="#bbb" strokeDasharray="2 1" /><rect x="7" y="6" width="7" height="6" stroke="#aaa" /></S>,
  <S w={17} h={15}><path d="M1 14V6l7-4 6 3v9M4 14V6M8 14V5M1 9h12M1 12h12" stroke="#bbb" /></S>,
  <S w={17} h={15}><path d="M5 1h10v8l-4 4H1V5zM1 5h10v8M11 5l4-4" stroke="#bbb" /></S>,
  <S w={16} h={15}><path d="M1 4h14M1 4l2-2v4l-2-2M15 4l-2-2v4zM1 0v14M15 0v5" stroke="#222" /><rect x="8" y="9" width="7" height="5" fill="#555" /><path d="M9 9V7a2 2 0 0 1 4 0v2" stroke="#555" /></S>,
];

function ViewBar() {
  const gaps = ["w-[21px]", "w-[21px]", "w-[21px]", "w-[21px]", "w-[21px]", "w-[23px]", "w-[21px]", "w-[19px]", "w-[22px]", "w-[20px]", "w-[21px]", "w-[21px]", "w-[20px]"];
  return (
    <div className="h-[20px] shrink-0 bg-[#f2f2f2] flex items-center text-[12px] text-[#111]">
      <div className="w-[77px] pl-[26px] shrink-0 whitespace-nowrap">1 : 24</div>
      {viewIcons.map((ic, i) => <div key={i} className={`${gaps[i]} shrink-0 flex justify-center`}>{ic}</div>)}
      <div className="w-[15px] h-[18px] ml-[2px] bg-[#e6e6e6] flex items-center justify-center shrink-0"><svg width="4" height="7"><path d="M4 0v7L0 3.500z" fill="#333" /></svg></div>
      <div className="w-[397px] shrink-0" />
      <div className="w-[14px] h-[17px] shrink-0 rounded-[2px] border border-[#a8a8a8] bg-gradient-to-b from-[#eee] to-[#ccc]" />
      <div className="flex-1" />
      <svg width="4" height="7" className="mr-[8px]"><path d="M0 0v7l4-3.500z" fill="#333" /></svg>
      <div className="w-[19px] h-[20px] shrink-0 bg-[#ececec] flex flex-wrap content-end justify-end gap-[1px] p-[2px]">
        <div className="w-[2px] h-[2px] bg-[#bbb]" /><div className="w-[2px] h-[2px] bg-[#bbb]" />
      </div>
    </div>
  );
}

/* ---------- status + taskbar ---------- */
const statusIcons: React.ReactNode[] = [
  <S w={22} h={18}><circle cx="6" cy="6" r="3.500" stroke="#d99a12" strokeWidth="2" /><circle cx="13" cy="6" r="3.500" stroke="#d99a12" strokeWidth="2" /><path d="M11 7v10l2-2 2 3 1-1-1-3h3z" fill="#fff" stroke="#222" strokeWidth=".8" /></S>,
  <S w={22} h={18}><path d="M1 14 13 4v10zM1 10h10" stroke="#1b6fc0" /><path d="M14 1l6 6M20 1l-6 6" stroke="#d22" strokeWidth="2" /><path d="M12 8v9l2-2 2 3 1-1-1-3h3z" fill="#fff" stroke="#222" strokeWidth=".8" /></S>,
  <S w={22} h={18}><path d="M4 2h8v3l-1 1v3l3 2H2l3-2V6L4 5z" fill="#f0a040" stroke="#a05a10" /><path d="M8 11v6" stroke="#333" /><path d="M13 7v10l2-2 2 3 1-1-1-3h3z" fill="#fff" stroke="#222" strokeWidth=".8" /></S>,
  <S w={22} h={18}><path d="M2 5l8-3v13l-8 2z" fill="#bcd8f1" stroke="#1b6fc0" /><path d="M12 1l6 6M18 1l-6 6" stroke="#d22" strokeWidth="2" /><path d="M12 8v9l2-2 2 3 1-1-1-3h3z" fill="#fff" stroke="#222" strokeWidth=".8" /></S>,
  <S w={22} h={18}><path d="M7 0v10M2 5h10M7 0l-2 2h4zM7 10l-2-2h4zM2 5l2-2v4zM12 5l-2-2v4z" fill="#111" stroke="#111" strokeWidth=".7" /><path d="M12 7v10l2-2 2 3 1-1-1-3h3z" fill="#fff" stroke="#222" strokeWidth=".8" /></S>,
];

function StatusBar() {
  const cls = ["w-[24px] ml-[0px]", "w-[24px] ml-[3px]", "w-[24px] ml-[2px]", "w-[24px] ml-[2px]", "w-[24px] ml-[0px]"];
  return (
    <div className="h-[24px] shrink-0 bg-gradient-to-b from-[#f2f2f2] to-[#c6c6c6] border-t border-[#6a6a6a] border-b-2 border-b-[#444] flex items-center pl-[2px] pt-[1px] text-[12px] text-[#222]">
      <div className="w-[375px] shrink-0">Click to select, TAB for alternates, CTRL adds, SHIFT unselects.</div>
      <div className="w-[999px] shrink-0" />
      {statusIcons.map((ic, i) => <div key={i} className={`${cls[i]} h-[20px] bg-[#dadada] flex items-center justify-center shrink-0`}>{ic}</div>)}
      <div className="ml-[2px] flex items-end">
        <S w={18} h={17}><path d="M1 1h16l-6 8v7l-4-2V9z" fill="#eee" stroke="#333" /></S>
        <span className="text-[11px] leading-none">:0</span>
      </div>
    </div>
  );
}

const TaskBtn = ({ cls, children }: { cls: string; children: React.ReactNode }) => <div className={`${cls} h-[40px] shrink-0 flex items-center justify-center`}>{children}</div>;
const active = "rounded-[2px] border border-[#56708c] bg-gradient-to-b from-[#eaf1f9] to-[#bcd0e6]";
const grip = (
  <div className="grid grid-cols-3 gap-[2px] h-[28px] content-center">
    {Array.from({ length: 21 }).map((_, i) => <div key={i} className="w-[2px] h-[2px] bg-[#4d5d72]" />)}
  </div>
);

function Taskbar() {
  return (
    <div className="h-[40px] shrink-0 flex items-center bg-gradient-to-r from-[#a8c1dc] via-[#a8c1dc] via-[80%] to-[#7d92aa] to-[87%] text-white">
      <div className="w-[54px] shrink-0 flex justify-center">
        <div className="w-[37px] h-[37px] rounded-full bg-gradient-to-b from-[#7fb8e8] via-[#1d5fa8] to-[#2c8ad0] border border-[#1e3a5a] flex items-center justify-center">
          <S w={20} h={18}><path d="M1 3c3-2 5-2 8 0l-1 6C5 7 3 7 0 8z" fill="#e8502a" /><path d="M10 3c3 2 5 2 9 0l-1 6c-3 2-6 2-9 0z" fill="#7dbb32" /><path d="M0 9c3-1 5-1 8 1l-1 6c-3-2-5-2-8-1z" fill="#2f8fe0" /><path d="M9 10c3 2 5 2 9 0l-1 6c-3 2-6 2-9 0z" fill="#f5c21a" /></S>
        </div>
      </div>
      <div className="w-[16px] shrink-0 flex justify-center">{grip}</div>
      <TaskBtn cls="w-[72px]">
        <S w={32} h={30}><path d="M1 5h12l3 3h13v18H1z" fill="#f5d376" stroke="#c9a040" /><rect x="6" y="9" width="20" height="6" fill="#fff" /><path d="M3 14h24l2 12H1z" fill="#fbe6a6" stroke="#c9a040" /><path d="M5 27v-5h12v5" stroke="#5fb0e0" strokeWidth="1.500" fill="#d8eefa" /></S>
      </TaskBtn>
      <TaskBtn cls="w-[48px]">
        <S w={30}><path d="M10 3h18v22H10z" fill="#9fc4e4" stroke="#5d86ad" /><rect x="2" y="6" width="20" height="20" fill="#d4e6f5" stroke="#5d86ad" /><circle cx="12" cy="16" r="8" fill="#fff" /><path d="M9 10l9 6-9 6z" fill="#ee7a16" /></S>
      </TaskBtn>
      <div className="w-[10px] shrink-0" />
      <TaskBtn cls={`w-[58px] ${active}`}>
        <S w={30}><circle cx="15" cy="15" r="14.500" fill="#db4437" /><path d="M15 15 28 22A14.500 14.500 0 0 1 9 28z" fill="#f4b400" /><path d="M15 15 9 28A14.500 14.500 0 0 1 2 8z" fill="#0f9d58" /><circle cx="15" cy="15" r="7" fill="#fff" /><circle cx="15" cy="15" r="5.500" fill="#4285f4" /></S>
      </TaskBtn>
      <div className="w-[4px] shrink-0" />
      <TaskBtn cls={`w-[58px] ${active}`}>
        <S w={31} h={30}><rect x="13" y="8" width="17" height="14" fill="#fff" stroke="#0a64b8" /><path d="M13 8l8 7 9-7" stroke="#0a64b8" /><path d="M1 4 17 1v28L1 26z" fill="#0a64b8" /><ellipse cx="9" cy="15" rx="4" ry="5" stroke="#fff" strokeWidth="2" /></S>
      </TaskBtn>
      <TaskBtn cls="w-[65px]">
        <S w={31} h={30}><rect x="14" y="3" width="16" height="24" fill="#fff" stroke="#1f7a44" /><path d="M18 8h10M18 13h10M18 18h10M18 23h10M23 4v22" stroke="#1f7a44" /><path d="M1 4 17 1v28L1 26z" fill="#1f7a44" /><path d="M5 10l6 10M11 10 5 20" stroke="#fff" strokeWidth="2" /></S>
      </TaskBtn>
      <TaskBtn cls={`w-[59px] ${active}`}>
        <div className="w-[30px] h-[34px] flex items-center justify-center bg-gradient-to-b from-[#dfe8f4] to-[#2f62b6]"><Logo w={22} c1="#2b55a8" c2="#173b85" /></div>
      </TaskBtn>
      <div className="w-[915px] shrink-0" />
      <div className="w-[16px] shrink-0 flex justify-center">{grip}</div>
      <div className="w-[31px] shrink-0 text-[12px] pl-[8px] mb-[6px]">ES</div>
      <div className="w-[22px] shrink-0 flex justify-center"><svg width="9" height="5"><path d="M0 5h9L4.500 0z" fill="#fff" /></svg></div>
      <div className="w-[26px] shrink-0 flex justify-center">
        <S w={16}><path d="M2 1v14M2 2h9l-2 3 2 3H2" fill="#fff" stroke="#fff" /><circle cx="11" cy="11" r="4.500" fill="#d92020" /><path d="M9 9l4 4M13 9l-4 4" stroke="#fff" /></S>
      </div>
      <div className="w-[24px] shrink-0 flex justify-center"><S w={13} h={16}><path d="M1 5h4l4-4v14l-4-4H1z" fill="#e8eef4" /><path d="M11 5a4 4 0 0 1 0 6" stroke="#e8eef4" /></S></div>
      <div className="w-[24px] shrink-0 flex justify-center"><S w={17}><rect x="3" y="3" width="13" height="10" fill="#7d92aa" stroke="#fff" /><path d="M1 1v6M4 1v6M1 7h3M2 7v8M7 15h7" stroke="#fff" /></S></div>
      <div className="w-[90px] shrink-0 flex flex-col items-center text-[12px] leading-[17px]"><span>09:19 a.m.</span><span>01/04/2016</span></div>
      <div className="flex-1 h-full border border-[#516479] bg-gradient-to-b from-[#8fa4ba] to-[#5f7288]" />
    </div>
  );
}

export default function App() {
  return (
    <div className="w-[1600px] h-[900px] flex flex-col overflow-hidden bg-[#e4e4e6] tracking-[-0.32px] font-['Noto_Sans',Tahoma,sans-serif]">
      <TitleBar />
      <Tabs />
      <Ribbon />
      <div className="h-[28px] shrink-0 border-t border-white bg-[#e4e4e6]" />
      <div className="flex-1 flex min-h-0">
        <div className="w-[385px] shrink-0 flex flex-col">
          <PropertiesPanel />
          <div className="h-[6px] shrink-0" />
          <ProjectBrowser />
        </div>
        <div className="w-[6px] shrink-0" />
        <div className="flex-1 flex flex-col min-w-0">
          <div className="flex-1 flex min-h-0">
            <Viewport />
            <div className="w-[19px] shrink-0 bg-[#f2f2f2] flex flex-col items-center border-t border-[#5a5a5a]">
              <div className="h-[18px] flex items-center"><Up /></div>
              <div className="h-[298px] shrink-0" />
              <div className="w-[15px] h-[17px] rounded-[2px] border border-[#a8a8a8] bg-gradient-to-r from-[#eee] to-[#ccc]" />
              <div className="flex-1" />
              <div className="h-[18px] flex items-center"><Dn /></div>
            </div>
          </div>
          <ViewBar />
        </div>
      </div>
      <StatusBar />
      <Taskbar />
    </div>
  );
}
